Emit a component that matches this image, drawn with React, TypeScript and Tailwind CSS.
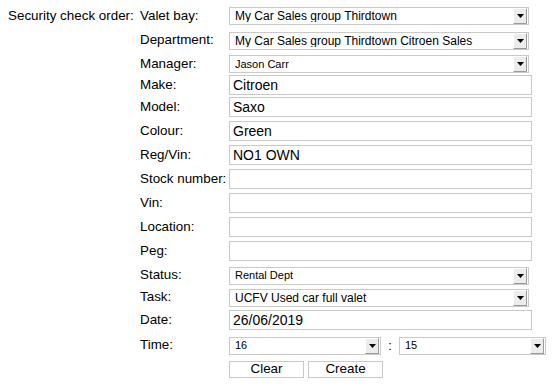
import React from "react";

const font = { fontFamily: '"Liberation Sans", Arial, sans-serif' };

function FakeSelect({ value, width, small }: { value: string; width: string; small?: boolean }) {
  return (
    <div
      className={`${width} h-[18px] flex items-center border border-[#c9c9c9] bg-white box-border`}
    >
      <span className={`flex-1 pl-[5px] truncate text-black ${small ? "text-[11px]" : "text-[12px]"} leading-none`}>
        {value}
      </span>
      <span className="w-[14px] h-[16px] mr-px flex items-center justify-center bg-[#ececec] border-r border-b border-[#9a9a9a] border-t border-l border-t-white border-l-white">
        <svg width="7" height="4" viewBox="0 0 7 4">
          <path d="M0 0h7L3.5 4z" fill="#000" />
        </svg>
      </span>
    </div>
  );
}

function TextBox({ value }: { value?: string }) {
  return (
    <div className="w-[303px] h-[20px] flex items-center border border-[#c9c9c9] bg-white box-border pl-[3px] text-[14px] text-black leading-none">
      {value}
    </div>
  );
}

type Row = { label: string; h: string; el: React.ReactNode };

export default function App() {
  const rows: Row[] = [
    { label: "Valet bay:", h: "h-[24px]", el: <FakeSelect value="My Car Sales group Thirdtown" width="w-[300px]" /> },
    { label: "Department:", h: "h-[25px]", el: <FakeSelect value="My Car Sales group Thirdtown Citroen Sales" width="w-[300px]" /> },
    { label: "Manager:", h: "h-[22px]", el: <FakeSelect value="Jason Carr" width="w-[300px]" small /> },
    { label: "Make:", h: "h-[20px]", el: <TextBox value="Citroen" /> },
    { label: "Model:", h: "h-[24px]", el: <TextBox value="Saxo" /> },
    { label: "Colour:", h: "h-[24px]", el: <TextBox value="Green" /> },
    { label: "Reg/Vin:", h: "h-[24px]", el: <TextBox value="NO1 OWN" /> },
    { label: "Stock number:", h: "h-[24px]", el: <TextBox /> },
    { label: "Vin:", h: "h-[24px]", el: <TextBox /> },
    { label: "Location:", h: "h-[24px]", el: <TextBox /> },
    { label: "Peg:", h: "h-[24px]", el: <TextBox /> },
    { label: "Status:", h: "h-[25px]", el: <FakeSelect value="Rental Dept" width="w-[300px]" small /> },
    { label: "Task:", h: "h-[19px]", el: <FakeSelect value="UCFV Used car full valet" width="w-[300px]" /> },
    { label: "Date:", h: "h-[26px]", el: <TextBox value="26/06/2019" /> },
    {
      label: "Time:",
      h: "h-[25px]",
      el: (
        <div className="flex items-center">
          <FakeSelect value="16" width="w-[152px]" small />
          <span className="w-[18px] text-center text-[13px]">:</span>
          <FakeSelect value="15" width="w-[147px]" small />
        </div>
      ),
    },
  ];

  return (
    <div className="w-[559px] h-[385px] bg-white text-black flex pt-[4px]" style={font}>
      <div className="w-[140px] pl-[8px] h-[24px] flex items-center text-[13.4px] shrink-0">
        Security check order:
      </div>
      <div className="flex flex-col">
        {rows.map((r) => (
          <div key={r.label} className={`flex items-center ${r.h}`}>
            <div className="w-[89px] text-[13.4px] shrink-0">{r.label}</div>
            {r.el}
          </div>
        ))}
        <div className="flex items-center h-[22px]">
          <div className="w-[89px] shrink-0" />
          <button className="w-[75px] h-[17px] border border-[#c9c9c9] bg-white text-[13.4px] leading-none">
            Clear
          </button>
          <button className="ml-[4px] w-[75px] h-[17px] border border-[#c9c9c9] bg-white text-[13.4px] leading-none">
            Create
          </button>
        </div>
      </div>
    </div>
  );
}
